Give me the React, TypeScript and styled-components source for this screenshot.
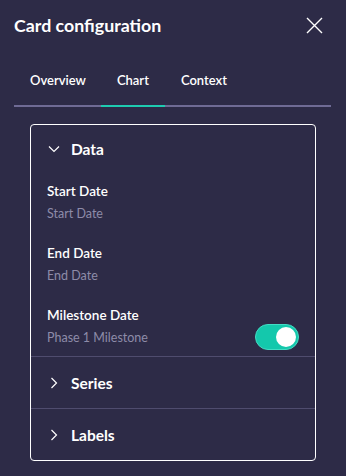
import React, { useState } from "react";
import styled, { createGlobalStyle } from "styled-components";

const GlobalStyle = createGlobalStyle`
  html, body {
    margin: 0;
    padding: 0;
    background: #2d2b47;
  }
  body {
    font-family: Lato, "Open Sans", Arial, sans-serif;
    color: #ffffff;
  }
`;

const Panel = styled.div`
  width: 346px;
  height: 476px;
  background: #2d2b47;
  box-sizing: border-box;
  padding: 0 15px 0 14px;
`;

const Header = styled.div`
  display: flex;
  align-items: center;
  justify-content: space-between;
  height: 50px;
  padding-right: 8px;
`;

const Title = styled.h1`
  margin: 0;
  font-size: 17.8px;
  font-weight: 700;
`;

const CloseButton = styled.button`
  background: none;
  border: none;
  padding: 0;
  width: 18px;
  height: 18px;
  display: flex;
  align-items: center;
  justify-content: center;
  cursor: pointer;
`;

const Tabs = styled.div`
  display: flex;
  margin-top: 18px;
  border-bottom: 2px solid #6f6b95;
`;

const Tab = styled.button<{ $active?: boolean }>`
  background: none;
  border: none;
  color: #ffffff;
  font-family: inherit;
  font-size: 13px;
  font-weight: 600;
  padding: 4px 16px 17px;
  margin-bottom: -2px;
  border-bottom: 2px solid ${(p) => (p.$active ? "#1ecbb0" : "transparent")};
  cursor: pointer;

  &:first-child {
    padding-right: 15px;
  }
`;

const Card = styled.div`
  margin: 17px 0 0 16px;
  width: 286px;
  box-sizing: border-box;
  border: 1px solid #ffffff;
  border-radius: 4px;
`;

const Section = styled.div<{ $last?: boolean }>`
  border-bottom: ${(p) => (p.$last ? "none" : "1px solid #4f4c6e")};
`;

const SectionHeader = styled.div<{ $height: number }>`
  display: flex;
  align-items: center;
  height: ${(p) => p.$height}px;
  padding-left: 17px;
  gap: 11px;
  font-size: 15.5px;
  font-weight: 700;
  cursor: pointer;
`;

const Fields = styled.div`
  display: flex;
  flex-direction: column;
  gap: 23px;
  padding: 10px 16px 10px 16px;
`;

const Field = styled.div`
  display: flex;
  align-items: flex-end;
  justify-content: space-between;
`;

const FieldText = styled.div`
  display: flex;
  flex-direction: column;
  gap: 6px;
`;

const Label = styled.div`
  font-size: 13.5px;
  font-weight: 600;
  line-height: 17px;
`;

const Value = styled.div`
  font-size: 12.5px;
  color: #8e8ba9;
  line-height: 16px;
`;

const Toggle = styled.button<{ $on: boolean }>`
  width: 44px;
  height: 26px;
  border-radius: 13px;
  border: 1px solid ${(p) => (p.$on ? "#43dcc4" : "#6f6b95")};
  background: ${(p) => (p.$on ? "#14c8ac" : "#4f4c6e")};
  padding: 2px;
  display: flex;
  justify-content: ${(p) => (p.$on ? "flex-end" : "flex-start")};
  align-items: center;
  margin-bottom: -4px;
  cursor: pointer;
  box-sizing: border-box;

  &::after {
    content: "";
    width: 20px;
    height: 20px;
    border-radius: 50%;
    background: #ffffff;
  }
`;

const Chevron = ({ open }: { open?: boolean }) => (
  <svg width="12" height="12" viewBox="0 0 12 12" fill="none">
    <path
      d={open ? "M1 3.5 L6 8.5 L11 3.5" : "M3.5 1 L8.5 6 L3.5 11"}
      stroke="#ffffff"
      strokeWidth="1.2"
    />
  </svg>
);

export default function App() {
  const [tab, setTab] = useState("Chart");
  const [milestone, setMilestone] = useState(true);

  return (
    <Panel>
      <GlobalStyle />
      <Header>
        <Title>Card configuration</Title>
        <CloseButton>
          <svg width="17" height="17" viewBox="0 0 17 17">
            <path d="M1 1 L16 16 M16 1 L1 16" stroke="#ffffff" strokeWidth="1.4" />
          </svg>
        </CloseButton>
      </Header>
      <Tabs>
        {["Overview", "Chart", "Context"].map((t) => (
          <Tab key={t} $active={t === tab} onClick={() => setTab(t)}>
            {t}
          </Tab>
        ))}
      </Tabs>
      <Card>
        <Section>
          <SectionHeader $height={48}>
            <Chevron open />
            Data
          </SectionHeader>
          <Fields>
            <FieldText>
              <Label>Start Date</Label>
              <Value>Start Date</Value>
            </FieldText>
            <FieldText>
              <Label>End Date</Label>
              <Value>End Date</Value>
            </FieldText>
            <Field>
              <FieldText>
                <Label>Milestone Date</Label>
                <Value>Phase 1 Milestone</Value>
              </FieldText>
              <Toggle $on={milestone} onClick={() => setMilestone(!milestone)} />
            </Field>
          </Fields>
        </Section>
        <Section>
          <SectionHeader $height={51}>
            <Chevron />
            Series
          </SectionHeader>
        </Section>
        <Section $last>
          <SectionHeader $height={51}>
            <Chevron />
            Labels
          </SectionHeader>
        </Section>
      </Card>
    </Panel>
  );
}
